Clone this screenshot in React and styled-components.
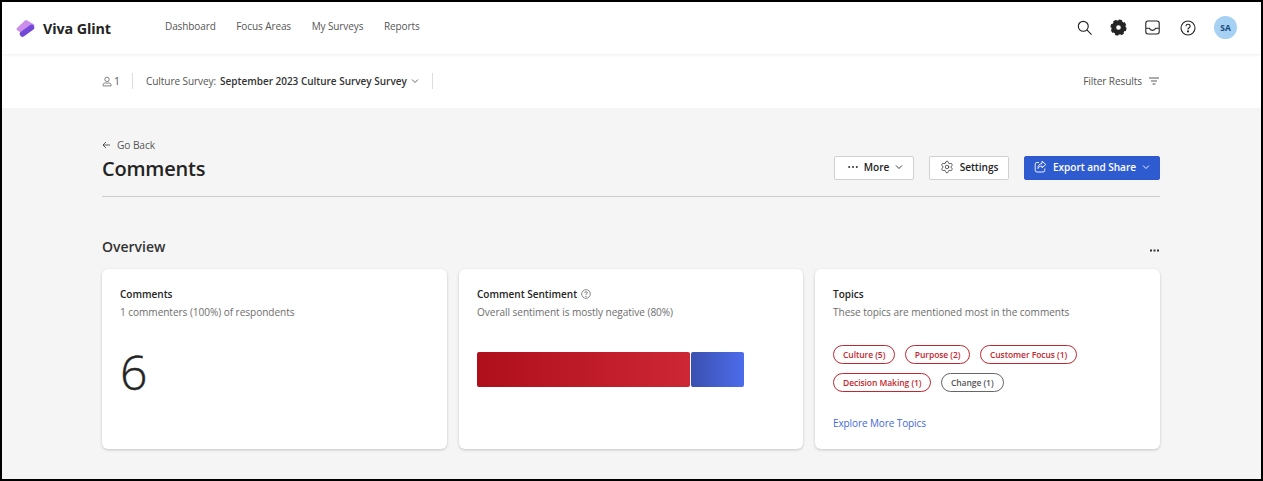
import React from "react";
import styled, { createGlobalStyle } from "styled-components";
import { Settings as SettingsIcon } from "lucide-react";

const Global = createGlobalStyle`
  html, body { margin: 0; padding: 0; height: 100%; }
  body { font-family: "Open Sans", "Noto Sans", sans-serif; color: #242424; background: #000; }
  * { box-sizing: border-box; }
`;
const Frame = styled.div`
  width: 1263px; height: 481px; border: 2px solid #000; background: #f5f5f5; overflow: hidden;
  display: flex; flex-direction: column;
`;
const Header = styled.header`
  height: 52px; background: #fff; display: flex; align-items: center; padding: 0 24px 0 13px;
  box-shadow: 0 1px 3px rgba(0,0,0,.07); position: relative; z-index: 1;
`;
const Brand = styled.div`
  display: flex; align-items: center; gap: 7px; width: 150px; font-size: 14.3px; font-weight: 700; color: #242424; letter-spacing: -.1px;
`;
const Nav = styled.nav`display: flex; gap: 20.6px; flex: 1; margin-bottom: 5px;`;
const NavItem = styled.a`font-size: 10px; color: #555; letter-spacing: -.1px;`;
const Tools = styled.div`display: flex; align-items: center; gap: 14px; margin-bottom: 1px;`;
const ToolIcon = styled.span`
  width: 20px; height: 20px; display: flex; align-items: center; justify-content: center; color: #242424;
  margin-left: ${p => p.$push || 0}px;
`;
const Avatar = styled.span`
  width: 23px; height: 23px; border-radius: 50%; background: #a6d1f3; color: #174a7c; font-size: 8.5px; font-weight: 700;
  display: flex; align-items: center; justify-content: center; margin-left: 2px;
`;
const SubBar = styled.div`
  height: 54px; background: #fff; display: flex; align-items: center; padding: 0 102px 0 100px;
  font-size: 10.1px; color: #555; letter-spacing: -.1px;
`;
const Count = styled.span`display: flex; align-items: center; gap: 2px; font-size: 10.5px; padding-right: 12px; height: 16px; border-right: 1px solid #ddd; width: 31px;`;
const Survey = styled.span`display: flex; align-items: center; padding: 0 13px 0 13px; height: 16px; border-right: 1px solid #ddd;`;
const Strong = styled.b`font-weight: 600; color: #333; margin: 0 4px; font-size: 10px; letter-spacing: -.02px;`;
const Filter = styled.span`margin-left: auto; display: flex; align-items: center; gap: 7px;`;
const Main = styled.main`flex: 1; padding: 30px 101px 0 100px;`;
const Back = styled.div`display: flex; align-items: center; gap: 6px; font-size: 10.2px; color: #555; height: 14px; letter-spacing: -.1px;`;
const TitleRow = styled.div`
  display: flex; align-items: center; height: 45px; padding-bottom: 11px; border-bottom: 1px solid #ccc; gap: 15px;
`;
const Title = styled.h1`margin: 0 auto 0 0; font-size: 20px; font-weight: 600; color: #242424; letter-spacing: -.2px;`;
const Button = styled.button`
  height: 24px; margin-bottom: 2px; padding: 0 0 2px ${p => p.$inset || 0}px; border-radius: 2px; border: 1px solid ${p => p.$primary ? "#3059d0" : "#d0d0d0"};
  background: ${p => p.$primary ? "#2f5bd0" : "#fff"}; color: ${p => p.$primary ? "#fff" : "#242424"};
  display: flex; align-items: center; justify-content: center; gap: 6px; width: ${p => p.$w}px; white-space: nowrap;
  font-family: inherit; font-size: 10.1px; font-weight: 600; letter-spacing: -.05px;
`;
const SectionRow = styled.div`display: flex; align-items: center; justify-content: space-between; margin-top: 40px; height: 20px;`;
const Section = styled.h2`margin: 0 0 2px; font-size: 14px; font-weight: 600; color: #333;`;
const Overflow = styled.span`display: flex; margin-top: 6px; margin-right: 1px;`;
const Cards = styled.div`display: grid; grid-template-columns: 345px 344px 345px; gap: 12px; margin-top: 12px;`;
const Card = styled.section`
  height: 180px; background: #fff; border-radius: 6px; box-shadow: 0 1px 3px rgba(0,0,0,.2); padding: 18px 18px;
  display: flex; flex-direction: column;
`;
const CardTitle = styled.div`display: flex; align-items: center; gap: 4px; font-size: 10px; font-weight: 600; color: #242424; height: 14px;`;
const CardSub = styled.div`font-size: 10.1px; color: #6e6e6e; margin-top: 4px; height: 14px; letter-spacing: -.06px;`;
const BigNumber = styled.div`font-size: 48px; font-weight: 300; -webkit-text-stroke: .4px #242424; color: #242424; margin-top: 19px; line-height: 68px;`;
const Bar = styled.div`display: flex; gap: 1px; margin-top: 33px; width: 267px; height: 35px;`;
const Segment = styled.div`border-radius: 2px; background: linear-gradient(90deg, ${p => p.$from}, ${p => p.$to}); flex: ${p => p.$size} 0 0;`;
const Chips = styled.div`display: flex; flex-wrap: wrap; gap: 9px 9.5px; margin-top: 26px; height: 46px; align-content: flex-start; width: 260px;`;
const Chip = styled.span`
  height: 19px; padding: 0 9px; border-radius: 10px; font-size: 8.5px; font-weight: 600; display: flex; align-items: center; letter-spacing: -.06px;
  border: 1px solid ${p => p.$neutral ? "#666" : "#c4262e"}; color: ${p => p.$neutral ? "#555" : "#c4262e"};
`;
const Link = styled.a`font-size: 10px; letter-spacing: -.1px; color: #3f6ad8; margin-top: 25px;`;

const Logo = () => (
  <svg width="21" height="21" viewBox="0 0 21 21">
    <path d="M3 11 11 3.500 18 7.500 10 15.500z" fill="#cb8fea" stroke="#cb8fea" strokeWidth="3" strokeLinejoin="round" />
    <path d="M7.500 16 16.500 9.500" stroke="#7448d6" strokeWidth="5.500" strokeLinecap="round" />
  </svg>
);
const Chevron = ({ c = "currentColor" }) => (
  <svg width="8" height="8" viewBox="0 0 8 8" fill="none" stroke={c} strokeWidth=".9"><path d="M1 2.500 4 5.500 7 2.500" /></svg>
);
const Dots = () => (
  <svg width="10" height="4" viewBox="0 0 10 4" fill="#333"><circle cx="1.200" cy="2" r="1" /><circle cx="5" cy="2" r="1" /><circle cx="8.800" cy="2" r="1" /></svg>
);
const SmallDots = () => (
  <svg width="9" height="3" viewBox="0 0 9 3" fill="#333"><rect x="0" y=".500" width="2" height="2" /><rect x="3.500" y=".500" width="2" height="2" /><rect x="7" y=".500" width="2" height="2" /></svg>
);
const SolidCog = () => (
  <svg width="17" height="17" viewBox="0 0 16 16">
    <circle cx="8" cy="8" r="4.500" fill="none" stroke="#242424" strokeWidth="4.600" />
    <circle cx="8" cy="8" r="6.300" fill="none" stroke="#242424" strokeWidth="2.600" strokeDasharray="2.950 2" />
  </svg>
);

export default function App() {
  return (
    <>
      <Global />
      <Frame>
        <Header>
          <Brand><Logo />Viva Glint</Brand>
          <Nav>
            <NavItem>Dashboard</NavItem><NavItem>Focus Areas</NavItem><NavItem>My Surveys</NavItem><NavItem>Reports</NavItem>
          </Nav>
          <Tools>
            <ToolIcon>
              <svg width="15" height="15" viewBox="0 0 16 16" fill="none" stroke="#242424" strokeWidth="1.200"><circle cx="6.700" cy="6.700" r="5.300" /><path d="M10.500 10.500 15.500 15.500" /></svg>
            </ToolIcon>
            <ToolIcon><SolidCog /></ToolIcon>
            <ToolIcon>
              <svg width="15" height="15" viewBox="0 0 15 15" fill="none" stroke="#242424" strokeWidth="1.100"><rect x=".8" y="1" width="13.400" height="13" rx="2.200" /><path d="M1 8.300h3.300c.6 1.400 1.600 2.100 3.200 2.100s2.600-.7 3.200-2.100H14" /></svg>
            </ToolIcon>
            <ToolIcon $push={2}>
              <svg width="16" height="16" viewBox="0 0 16 16" fill="none" stroke="#242424" strokeWidth="1.100"><circle cx="8" cy="8" r="7" /><path d="M5.900 6.200C6 5 6.900 4.300 8 4.300c1.200 0 2.100.8 2.100 1.900 0 1.500-2.100 1.600-2.100 3.200" /><circle cx="8" cy="11.400" r=".5" fill="#242424" /></svg>
            </ToolIcon>
            <Avatar>SA</Avatar>
          </Tools>
        </Header>
        <SubBar>
          <Count>
            <svg width="11" height="11" viewBox="0 0 11 11" fill="none" stroke="#555" strokeWidth=".8"><circle cx="5.500" cy="3.200" r="2.400" /><path d="M1.200 10.300V9c0-1 .8-1.800 1.800-1.800h5c1 0 1.800.8 1.800 1.800v1.300z" /></svg>
            1
          </Count>
          <Survey>Culture Survey:<Strong>September 2023 Culture Survey Survey</Strong><Chevron /></Survey>
          <Filter>
            Filter Results
            <svg width="10" height="8" viewBox="0 0 10 8" fill="none" stroke="#444" strokeWidth=".9"><path d="M0 1h10M2 4h6M3.500 7h3" /></svg>
          </Filter>
        </SubBar>
        <Main>
          <Back>
            <svg width="9" height="8" viewBox="0 0 9 8" fill="none" stroke="#333" strokeWidth=".8"><path d="M8 4H1M4 1 1 4l3 3" /></svg>
            Go Back
          </Back>
          <TitleRow>
            <Title>Comments</Title>
            <Button $w={80} $inset={3}><Dots />More<Chevron /></Button>
            <Button $w={80}><SettingsIcon size={14} strokeWidth={1.300} color="#333" />Settings</Button>
            <Button $w={136} $primary>
              <svg width="13" height="13" viewBox="0 0 13 13" fill="none" stroke="#fff" strokeWidth=".9"><path d="M5 2.500H3A1.800 1.800 0 0 0 1.200 4.300v5.900A1.800 1.800 0 0 0 3 12h6a1.800 1.800 0 0 0 1.800-1.800V8.500" /><path d="M8 1.200l3.800 3.300L8 7.800V6C6 6 4.800 6.800 4 8.500c0-3 1.500-4.800 4-5z" /></svg>
              Export and Share<Chevron c="#fff" />
            </Button>
          </TitleRow>
          <SectionRow><Section>Overview</Section><Overflow><SmallDots /></Overflow></SectionRow>
          <Cards>
            <Card>
              <CardTitle>Comments</CardTitle>
              <CardSub>1 commenters (100%) of respondents</CardSub>
              <BigNumber>6</BigNumber>
            </Card>
            <Card>
              <CardTitle>Comment Sentiment
                <svg width="10" height="10" viewBox="0 0 10 10" fill="none" stroke="#555" strokeWidth=".7"><circle cx="5" cy="5" r="4.300" /><path d="M3.700 4c0-.8.6-1.300 1.300-1.300s1.300.5 1.300 1.200c0 .9-1.300 1-1.300 2" /><circle cx="5" cy="7.300" r=".3" /></svg>
              </CardTitle>
              <CardSub>Overall sentiment is mostly negative (80%)</CardSub>
              <Bar>
                <Segment $size={213} $from="#ae0f1a" $to="#cd2635" />
                <Segment $size={53} $from="#3a50b0" $to="#4d6ceb" />
              </Bar>
            </Card>
            <Card>
              <CardTitle>Topics</CardTitle>
              <CardSub>These topics are mentioned most in the comments</CardSub>
              <Chips>
                <Chip>Culture (5)</Chip><Chip>Purpose (2)</Chip><Chip>Customer Focus (1)</Chip>
                <Chip>Decision Making (1)</Chip><Chip $neutral>Change (1)</Chip>
              </Chips>
              <Link>Explore More Topics</Link>
            </Card>
          </Cards>
        </Main>
      </Frame>
    </>
  );
}
